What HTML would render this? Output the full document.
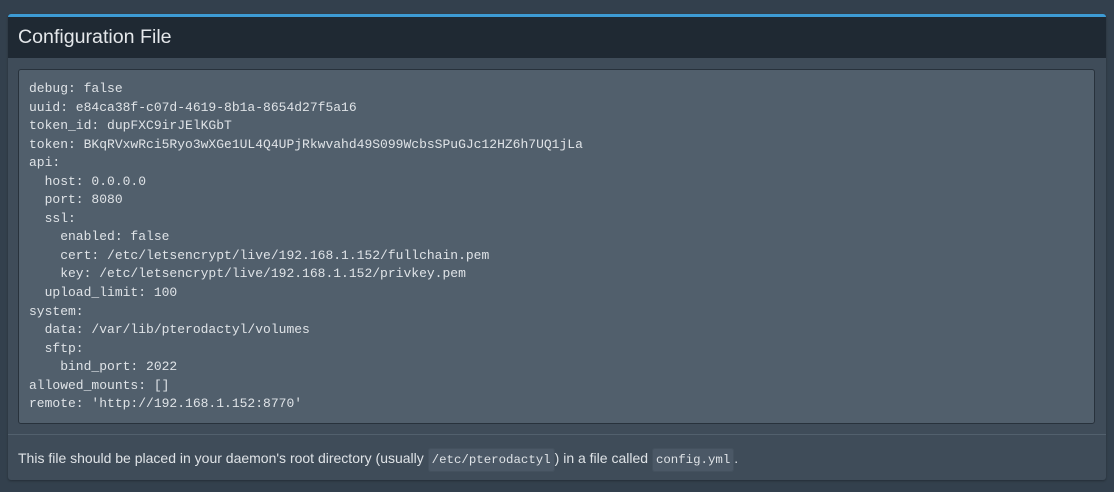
<!DOCTYPE html>
<html><head><style>
body{margin:0;background:#33404d;width:1114px;height:492px;overflow:hidden;font-family:"Liberation Sans",sans-serif;}
.box{position:absolute;left:8px;top:14px;width:1098px;height:463px;background:#3f4c59;border-top:3px solid #3d9bd4;border-radius:3px;box-shadow:0 1px 2px rgba(0,0,0,.3);}
.hd{height:41px;background:#1f2933;color:#e5e8eb;font-size:19.6px;line-height:41px;padding-left:10px;}
pre{position:absolute;left:10px;top:52px;width:1077px;height:355px;margin:0;box-sizing:border-box;background:#515f6c;border:1px solid #28323c;border-radius:3px;padding:10px 10px;font-family:"Liberation Mono",monospace;font-size:13px;line-height:18.55px;color:#dfe3e7;}
.ft{position:absolute;left:0;right:0;top:417px;border-top:1px solid #52606d;height:46px;color:#dfe3e7;font-size:14px;padding-left:10px;line-height:46px;}
code{font-family:"Liberation Mono",monospace;font-size:12.4px;background:#4b5866;border:1px solid #44515e;border-radius:3px;padding:4px 3px;}
</style></head><body>
<div class="box">
<div class="hd">Configuration File</div>
<pre>debug: false
uuid: e84ca38f-c07d-4619-8b1a-8654d27f5a16
token_id: dupFXC9irJElKGbT
token: BKqRVxwRci5Ryo3wXGe1UL4Q4UPjRkwvahd49S099WcbsSPuGJc12HZ6h7UQ1jLa
api:
  host: 0.0.0.0
  port: 8080
  ssl:
    enabled: false
    cert: /etc/letsencrypt/live/192.168.1.152/fullchain.pem
    key: /etc/letsencrypt/live/192.168.1.152/privkey.pem
  upload_limit: 100
system:
  data: /var/lib/pterodactyl/volumes
  sftp:
    bind_port: 2022
allowed_mounts: []
remote: 'http://192.168.1.152:8770'</pre>
<div class="ft">This file should be placed in your daemon's root directory (usually <code>/etc/pterodactyl</code>) in a file called <code>config.yml</code>.</div>
</div>
</body></html>
